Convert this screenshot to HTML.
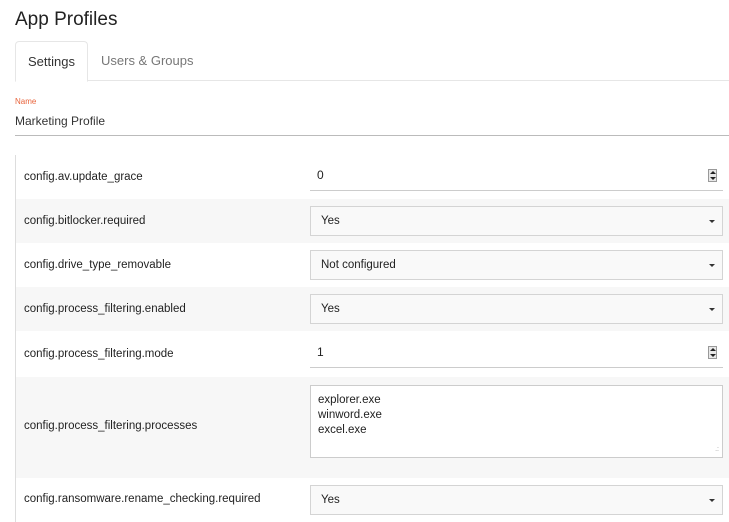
<!DOCTYPE html>
<html><head><style>
*{box-sizing:border-box;margin:0;padding:0}
body{width:729px;height:522px;background:#fff;font-family:"Liberation Sans",sans-serif;color:#222;position:relative;overflow:hidden}
.a{position:absolute}
h1{position:absolute;left:15px;top:9px;font-size:19px;font-weight:normal;color:#222}
.tab{position:absolute;top:41px;height:40px;font-size:13px;line-height:40px}
.row{position:absolute;left:15px;right:0;border-left:1px solid #ddd}
.row.g{background:#f7f7f7}
.lbl{position:absolute;left:8px;font-size:11.5px;color:#222}
.sel{position:absolute;left:294px;width:413px;height:30px;border:1px solid #d4d4d4;background:#f9f9f9;font-size:11.5px;line-height:28px;padding-left:10px}
.sel:after{content:"";position:absolute;right:7px;top:13px;border:3px solid transparent;border-top:3px solid #333;border-bottom:0}
.num{position:absolute;left:294px;width:413px;height:30px;border-bottom:1px solid #ccc;font-size:12px;line-height:28px;padding-left:7px}
.spin{position:absolute;right:6px;top:8px;width:9px;height:13px;border:1px solid #999;background:#e8e8e8}
.spin:before{content:"";position:absolute;left:1px;top:1px;border:3px solid transparent;border-bottom:3px solid #222;border-top:0}
.spin:after{content:"";position:absolute;left:1px;top:7px;border:3px solid transparent;border-top:3px solid #222;border-bottom:0}
</style></head><body>
<h1>App Profiles</h1>
<div class="a" style="left:15px;top:80px;width:714px;height:1px;background:#e6e6e6"></div>
<div class="tab" style="left:15px;width:73px;border:1px solid #e6e6e6;border-bottom:1px solid #fff;border-radius:4px 4px 0 0;background:#fff;text-align:center;color:#333;height:41px">Settings</div>
<div class="tab" style="left:101px;color:#777">Users &amp; Groups</div>
<div class="a" style="left:15px;top:97px;font-size:8px;color:#e8643c">Name</div>
<div class="a" style="left:15px;top:114px;font-size:12px;color:#333">Marketing Profile</div>
<div class="a" style="left:15px;top:135px;width:714px;height:1px;background:#bbb"></div>

<div class="row" style="top:155px;height:44px"><div class="lbl" style="top:16px">config.av.update_grace</div><div class="num" style="top:6px">0<div class="spin"></div></div></div>
<div class="row g" style="top:199px;height:44px"><div class="lbl" style="top:16px">config.bitlocker.required</div><div class="sel" style="top:7px">Yes</div></div>
<div class="row" style="top:243px;height:44px"><div class="lbl" style="top:16px">config.drive_type_removable</div><div class="sel" style="top:7px">Not configured</div></div>
<div class="row g" style="top:287px;height:44px"><div class="lbl" style="top:16px">config.process_filtering.enabled</div><div class="sel" style="top:7px">Yes</div></div>
<div class="row" style="top:331px;height:46px"><div class="lbl" style="top:17px">config.process_filtering.mode</div><div class="num" style="top:7px">1<div class="spin"></div></div></div>
<div class="row g" style="top:377px;height:101px"><div class="lbl" style="top:43px">config.process_filtering.processes</div>
<div class="a" style="left:294px;top:8px;width:413px;height:73px;border:1px solid #ccc;background:#fff;font-size:11.5px;line-height:15px;padding:7px 7px">explorer.exe<br>winword.exe<br>excel.exe<span class="a" style="right:3px;bottom:0;font-size:7px;color:#999">.:</span></div></div>
<div class="row" style="top:478px;height:44px"><div class="lbl" style="top:15px">config.ransomware.rename_checking.required</div><div class="sel" style="top:7px">Yes</div></div>
</body></html>
